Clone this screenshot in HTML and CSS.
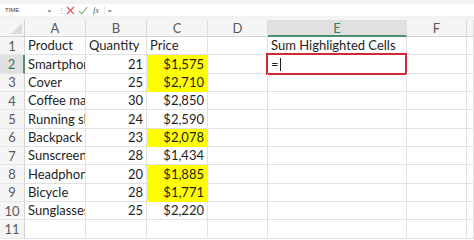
FILE: index.html
```html
<!DOCTYPE html>
<html lang="en">
<head>
    <meta charset="UTF-8">
    <title>Sum Highlighted Cells</title>
    <link rel="stylesheet" href="styles.css">
</head>
<body>
    <div class="formula-bar">
        <div class="name-box">TIME <span class="caret">&#8964;</span></div>
        <span class="dots">&#8942;</span>
        <svg class="icon" width="9" height="9" viewBox="0 0 9 9">
            <path d="M1 1 L8 8 M8 1 L1 8" stroke="#e0535b" stroke-width="1.2" fill="none"/>
        </svg>
        <svg class="icon" width="10" height="9" viewBox="0 0 10 9">
            <path d="M1 5 L3.8 7.8 L9 1.2" stroke="#7cb77f" stroke-width="1.1" fill="none"/>
        </svg>
        <span class="fx">fx</span>
        <div class="formula-input">=</div>
    </div>

    <div class="sheet">
        <div class="corner"></div>
        <div class="col-head">A</div>
        <div class="col-head">B</div>
        <div class="col-head">C</div>
        <div class="col-head">D</div>
        <div class="col-head active">E</div>
        <div class="col-head">F</div>
        <div class="col-head"></div>

        <div class="row-head">1</div>
        <div class="cell">Product</div>
        <div class="cell">Quantity</div>
        <div class="cell">Price</div>
        <div class="cell"></div>
        <div class="cell">Sum Highlighted Cells</div>
        <div class="cell"></div>
        <div class="cell"></div>

        <div class="row-head active">2</div>
        <div class="cell">Smartphone</div>
        <div class="cell num">21</div>
        <div class="cell num yellow">$1,575</div>
        <div class="cell"></div>
        <div class="cell selected">=<span class="cursor"></span><div class="select-box"></div></div>
        <div class="cell"></div>
        <div class="cell"></div>

        <div class="row-head">3</div>
        <div class="cell">Cover</div>
        <div class="cell num">25</div>
        <div class="cell num yellow">$2,710</div>
        <div class="cell"></div>
        <div class="cell"></div>
        <div class="cell"></div>
        <div class="cell"></div>

        <div class="row-head">4</div>
        <div class="cell">Coffee maker</div>
        <div class="cell num">30</div>
        <div class="cell num">$2,850</div>
        <div class="cell"></div>
        <div class="cell"></div>
        <div class="cell"></div>
        <div class="cell"></div>

        <div class="row-head">5</div>
        <div class="cell">Running shoes</div>
        <div class="cell num">24</div>
        <div class="cell num">$2,590</div>
        <div class="cell"></div>
        <div class="cell"></div>
        <div class="cell"></div>
        <div class="cell"></div>

        <div class="row-head">6</div>
        <div class="cell">Backpack</div>
        <div class="cell num">23</div>
        <div class="cell num yellow">$2,078</div>
        <div class="cell"></div>
        <div class="cell"></div>
        <div class="cell"></div>
        <div class="cell"></div>

        <div class="row-head">7</div>
        <div class="cell">Sunscreen</div>
        <div class="cell num">28</div>
        <div class="cell num">$1,434</div>
        <div class="cell"></div>
        <div class="cell"></div>
        <div class="cell"></div>
        <div class="cell"></div>

        <div class="row-head">8</div>
        <div class="cell">Headphones</div>
        <div class="cell num">20</div>
        <div class="cell num yellow">$1,885</div>
        <div class="cell"></div>
        <div class="cell"></div>
        <div class="cell"></div>
        <div class="cell"></div>

        <div class="row-head">9</div>
        <div class="cell">Bicycle</div>
        <div class="cell num">28</div>
        <div class="cell num yellow">$1,771</div>
        <div class="cell"></div>
        <div class="cell"></div>
        <div class="cell"></div>
        <div class="cell"></div>

        <div class="row-head">10</div>
        <div class="cell">Sunglasses</div>
        <div class="cell num">25</div>
        <div class="cell num">$2,220</div>
        <div class="cell"></div>
        <div class="cell"></div>
        <div class="cell"></div>
        <div class="cell"></div>

        <div class="row-head">11</div>
        <div class="cell"></div>
        <div class="cell"></div>
        <div class="cell"></div>
        <div class="cell"></div>
        <div class="cell"></div>
        <div class="cell"></div>
        <div class="cell"></div>
    </div>
</body>
</html>
```

FILE: styles.css
```css
body {
    margin: 0;
    width: 474px;
    height: 240px;
    overflow: hidden;
    background-color: #f3f3f3;
    font-family: Lato, "Liberation Sans", sans-serif;
}
.formula-bar {
    display: flex;
    align-items: center;
    height: 12px;
    margin-top: 4px;
    margin-bottom: 4px;
    background-color: white;
    font-size: 7px;
    color: #444;
}
.name-box {
    display: flex;
    justify-content: space-between;
    width: 48px;
    padding-left: 5px;
    padding-right: 3px;
    font-family: "Liberation Sans", sans-serif;
    font-size: 6px;
}
.caret {
    font-size: 8px;
    line-height: 6px;
}
.dots {
    width: 10px;
    text-align: center;
    color: #888;
}
.icon {
    margin-right: 3px;
}
.fx {
    margin-left: 2px;
    font-family: "Liberation Serif", serif;
    font-style: italic;
    font-size: 8px;
    color: #555;
}
.formula-input {
    flex: 1;
    margin-left: 5px;
    padding-left: 3px;
    border-left: 1px solid #e6e6e6;
    font-size: 7px;
}
.sheet {
    display: grid;
    grid-template-columns: 25px 61px 61px 61px 60px 139px 60px 1fr;
    grid-template-rows: 17px;
    grid-auto-rows: 18.33px;
    height: 220px;
    overflow: hidden;
    background-color: white;
    font-size: 13px;
    color: #1e1e1e;
}
.corner {
    position: relative;
    background-color: #f5f5f5;
    border-right: 1px solid #d4d4d4;
    border-bottom: 1px solid #d4d4d4;
    overflow: hidden;
}
.corner::after {
    content: "";
    position: absolute;
    right: 2px;
    bottom: 2px;
    border-left: 11px solid transparent;
    border-bottom: 11px solid #dcdcdc;
}
.col-head {
    display: flex;
    justify-content: center;
    align-items: center;
    background-color: #f5f5f5;
    border-right: 1px solid #dedede;
    border-bottom: 1px solid #d4d4d4;
    color: #5a5a5a;
    font-size: 13px;
}
.col-head.active {
    background-color: #e0e0e0;
    border-bottom: 2px solid #4f8f6f;
    color: #3f7a5c;
}
.row-head {
    display: flex;
    justify-content: center;
    align-items: center;
    background-color: #f5f5f5;
    border-right: 1px solid #d4d4d4;
    border-bottom: 1px solid #e6e6e6;
    color: #5a5a5a;
    font-size: 13px;
}
.row-head.active {
    background-color: #e0e0e0;
    border-right: 2px solid #4f8f6f;
    color: #3f7a5c;
}
.cell {
    position: relative;
    display: flex;
    align-items: flex-end;
    padding: 0 3px 1px 3px;
    border-right: 1px solid #e1e1e1;
    border-bottom: 1px solid #e1e1e1;
    white-space: nowrap;
    overflow: hidden;
}
.num {
    justify-content: flex-end;
}
.yellow {
    background-color: #ffff00;
    border-color: #ffff00;
}
.selected {
    overflow: visible;
}
.cursor {
    display: inline-block;
    width: 1px;
    height: 13px;
    margin-left: 1px;
    margin-bottom: 1px;
    background-color: #222;
}
.select-box {
    position: absolute;
    top: -2px;
    left: -2px;
    right: -1px;
    bottom: -2px;
    border: 2px solid #cf2a35;
}
```
